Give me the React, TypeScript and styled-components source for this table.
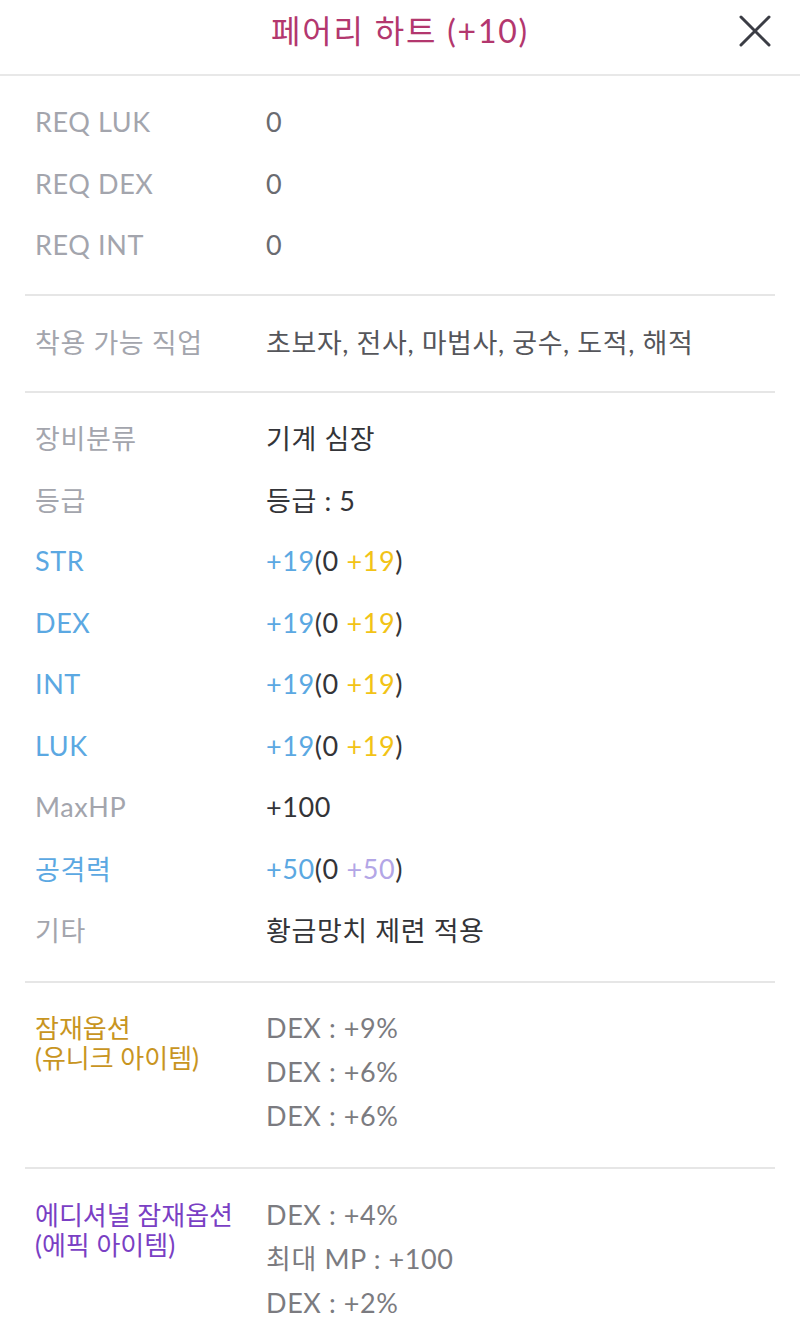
import React from "react";
import styled, { createGlobalStyle } from "styled-components";

const Global = createGlobalStyle`
  html, body { margin: 0; padding: 0; background: #fff; }
  body { font-family: Lato, "Noto Sans CJK KR", "Noto Sans", sans-serif; }
`;

const Page = styled.div`
  width: 800px;
  background: #fff;
`;

const Header = styled.header`
  position: relative;
  height: 74px;
  border-bottom: 2px solid #e8e8e8;
  display: flex;
  align-items: center;
  justify-content: center;
`;

const Title = styled.h1`
  margin: 0;
  font-weight: 400;
  font-size: 32px;
  color: #b3376e;
  letter-spacing: 1.8px;
  padding-bottom: 16px;
`;

const CloseButton = styled.button`
  position: absolute;
  right: 28px;
  top: 14px;
  width: 34px;
  height: 34px;
  padding: 0;
  border: none;
  background: none;
  display: flex;
  align-items: center;
  justify-content: center;
`;

const Body = styled.div`
  padding: 0 25px;
`;

const Section = styled.section<{ $top?: number; $bottom?: number; $last?: boolean }>`
  padding: ${(p) => p.$top ?? 16}px 0 ${(p) => p.$bottom ?? 19}px;
  border-bottom: ${(p) => (p.$last ? "none" : "2px solid #e6e6e6")};
`;

const Row = styled.div`
  display: grid;
  grid-template-columns: 231px 1fr;
  height: 61.5px;
  align-items: center;
  padding-left: 10px;
  font-size: 27px;
  letter-spacing: 0.6px;
`;

const Label = styled.div<{ $color?: string }>`
  color: ${(p) => p.$color ?? "#a3a5ad"};
  white-space: nowrap;
`;

const Value = styled.div<{ $color?: string }>`
  color: ${(p) => p.$color ?? "#333438"};
  white-space: nowrap;
`;

const Blue = styled.span`color: #5ba8e2;`;
const Yellow = styled.span`color: #f2c316;`;
const Lilac = styled.span`color: #b3a6e6;`;

const OptionBlock = styled.div`
  display: grid;
  grid-template-columns: 231px 1fr;
  padding-left: 10px;
  font-size: 27px;
  letter-spacing: 0.6px;
  align-items: start;
`;

const OptionLabel = styled.div<{ $color: string }>`
  color: ${(p) => p.$color};
  font-size: 26px;
  letter-spacing: 0;
  line-height: 30px;
  margin-top: 7px;
  white-space: nowrap;
`;

const OptionList = styled.div`
  display: flex;
  flex-direction: column;
`;

const OptionLine = styled.div`
  line-height: 44px;
  color: #7b7b80;
  white-space: nowrap;
`;

const CloseIcon = () => (
  <svg width="34" height="34" viewBox="0 0 34 34">
    <path d="M3 3 L31 31 M31 3 L3 31" stroke="#3b3d45" strokeWidth="3" strokeLinecap="round" fill="none" />
  </svg>
);

const Stat = ({ base, extra, lilac }: { base: string; extra: string; lilac?: boolean }) => (
  <>
    <Blue>{base}</Blue>(0 {lilac ? <Lilac>{extra}</Lilac> : <Yellow>{extra}</Yellow>})
  </>
);

export default function App() {
  return (
    <Page>
      <Global />
      <Header>
        <Title>페어리 하트 (+10)</Title>
        <CloseButton aria-label="닫기">
          <CloseIcon />
        </CloseButton>
      </Header>
      <Body>
        <Section $top={15} $bottom={18}>
          <Row><Label>REQ LUK</Label><Value $color="#6a6b70">0</Value></Row>
          <Row><Label>REQ DEX</Label><Value $color="#6a6b70">0</Value></Row>
          <Row><Label>REQ INT</Label><Value $color="#6a6b70">0</Value></Row>
        </Section>
        <Section $top={15} $bottom={19}>
          <Row><Label>착용 가능 직업</Label><Value $color="#55565b">초보자, 전사, 마법사, 궁수, 도적, 해적</Value></Row>
        </Section>
        <Section $top={14} $bottom={20}>
          <Row><Label>장비분류</Label><Value>기계 심장</Value></Row>
          <Row><Label>등급</Label><Value>등급 : 5</Value></Row>
          <Row><Label $color="#5ba8e2">STR</Label><Value><Stat base="+19" extra="+19" /></Value></Row>
          <Row><Label $color="#5ba8e2">DEX</Label><Value><Stat base="+19" extra="+19" /></Value></Row>
          <Row><Label $color="#5ba8e2">INT</Label><Value><Stat base="+19" extra="+19" /></Value></Row>
          <Row><Label $color="#5ba8e2">LUK</Label><Value><Stat base="+19" extra="+19" /></Value></Row>
          <Row><Label>MaxHP</Label><Value>+100</Value></Row>
          <Row><Label $color="#5ba8e2">공격력</Label><Value><Stat base="+50" extra="+50" lilac /></Value></Row>
          <Row><Label>기타</Label><Value>황금망치 제련 적용</Value></Row>
        </Section>
        <Section $top={23} $bottom={29}>
          <OptionBlock>
            <OptionLabel $color="#c8951f">잠재옵션<br />(유니크 아이템)</OptionLabel>
            <OptionList>
              <OptionLine>DEX : +9%</OptionLine>
              <OptionLine>DEX : +6%</OptionLine>
              <OptionLine>DEX : +6%</OptionLine>
            </OptionList>
          </OptionBlock>
        </Section>
        <Section $top={24} $bottom={19} $last>
          <OptionBlock>
            <OptionLabel $color="#7a3fc4">에디셔널 잠재옵션<br />(에픽 아이템)</OptionLabel>
            <OptionList>
              <OptionLine>DEX : +4%</OptionLine>
              <OptionLine>최대 MP : +100</OptionLine>
              <OptionLine>DEX : +2%</OptionLine>
            </OptionList>
          </OptionBlock>
        </Section>
      </Body>
    </Page>
  );
}
